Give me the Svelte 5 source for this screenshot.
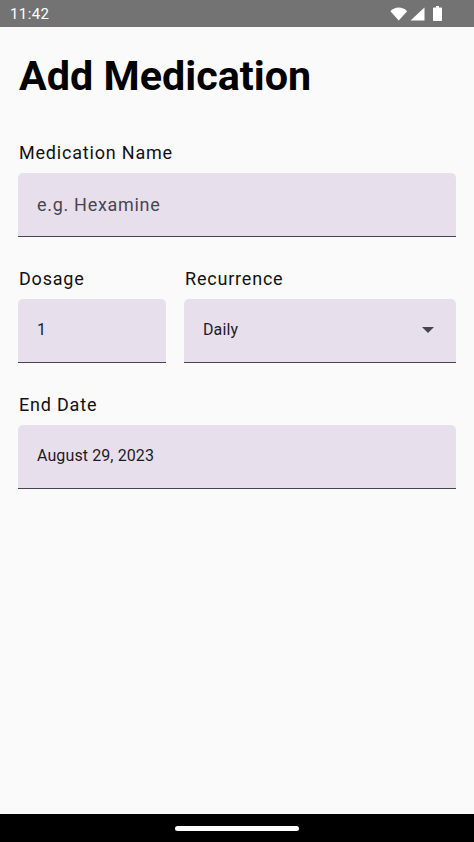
<script lang="ts">
  let name = $state('');
  let dosage = $state('1');
  let recurrence = $state('Daily');
  let endDate = $state('August 29, 2023');
</script>

<div class="screen">
  <!-- System status bar -->
  <div class="status-bar">
    <span class="clock">11:42</span>
    <div class="status-icons">
      <svg width="18" height="14" viewBox="0 0 20 14" preserveAspectRatio="none"><path d="M0.5 4.2C3 1.8 6.3 0.6 9.7 0.6s6.9 1.2 9.3 3.6L9.7 13.6z" fill="#fff" /></svg>
      <svg width="15" height="14" viewBox="0 0 15 14"><path d="M14.5 0.5V13.5H0.5z" fill="#fff" /></svg>
      <svg class="battery" width="9" height="15" viewBox="0 0 9 15"><path d="M3 0h3v1.500h2.200a.8.800 0 0 1 .8.800V14.200a.8.800 0 0 1-.8.800H.8a.8.800 0 0 1-.8-.800V2.300a.8.800 0 0 1 .8-.800H3z" fill="#fff" /></svg>
    </div>
  </div>

  <main class="content">
    <h1 class="page-title">Add Medication</h1>

    <div class="form">
      <div class="field">
        <label for="med-name">Medication Name</label>
        <input id="med-name" class="large" placeholder="e.g. Hexamine" bind:value={name} />
      </div>

      <div class="row">
        <div class="field dosage">
          <label for="dosage">Dosage</label>
          <input id="dosage" bind:value={dosage} />
        </div>
        <div class="field recurrence">
          <label for="recurrence">Recurrence</label>
          <button id="recurrence" class="select" type="button">
            <span>{recurrence}</span>
            <svg width="12" height="6" viewBox="0 0 12 6"><path d="M0 0h12L6 6z" fill="#49454f" /></svg>
          </button>
        </div>
      </div>

      <div class="field">
        <label for="end-date">End Date</label>
        <input id="end-date" bind:value={endDate} />
      </div>
    </div>
  </main>

  <!-- Gesture navigation bar -->
  <div class="nav-bar">
    <div class="handle"></div>
  </div>
</div>

<style>
  :global(body) {
    margin: 0;
  }

  .screen {
    display: flex;
    flex-direction: column;
    height: 842px;
    background: #fafafa;
    font-family: Roboto, sans-serif;
    overflow: hidden;
  }

  .status-bar {
    display: flex;
    align-items: center;
    justify-content: space-between;
    height: 27px;
    padding: 0 32px 0 10px;
    background: #737373;
    color: #fff;
    flex-shrink: 0;
  }

  .clock {
    font-size: 15px;
    letter-spacing: 0.4px;
  }

  .status-icons {
    display: flex;
    align-items: center;
    gap: 2px;
  }

  .battery {
    margin-left: 6px;
  }

  .content {
    flex: 1;
    padding: 0 18px;
  }

  .page-title {
    margin: 24px 0 0 1px;
    font-size: 41.3px;
    line-height: 50px;
    font-weight: 700;
    color: #000;
  }

  .form {
    display: flex;
    flex-direction: column;
    gap: 29.2px;
    margin-top: 39px;
  }

  .row {
    display: flex;
    gap: 18px;
  }

  .dosage {
    width: 148px;
  }

  .recurrence {
    flex: 1;
  }

  .field {
    display: flex;
    flex-direction: column;
  }

  label {
    height: 24px;
    margin-bottom: 9px;
    padding-left: 1px;
    font-size: 18px;
    line-height: 25px;
    letter-spacing: 0.8px;
    color: #111;
  }

  input,
  .select {
    box-sizing: border-box;
    width: 100%;
    height: 64px;
    padding: 0 19px 3px;
    border: none;
    border-bottom: 1.5px solid #49454f;
    border-radius: 5px 5px 0 0;
    background: #e7e0ec;
    font-family: inherit;
    font-size: 16px;
    letter-spacing: 0.1px;
    color: #1c1b1f;
    outline: none;
  }

  input.large {
    padding: 0 19px;
    font-size: 18px;
    letter-spacing: 0.7px;
  }

  input::placeholder {
    color: #49454f;
    opacity: 1;
  }

  .select {
    display: flex;
    align-items: center;
    justify-content: space-between;
    padding: 0 22px 2px 19px;
    text-align: left;
  }

  .nav-bar {
    display: flex;
    align-items: center;
    justify-content: center;
    height: 28px;
    background: #000;
    flex-shrink: 0;
  }

  .handle {
    width: 124px;
    height: 5px;
    border-radius: 3px;
    background: #fff;
  }
</style>
